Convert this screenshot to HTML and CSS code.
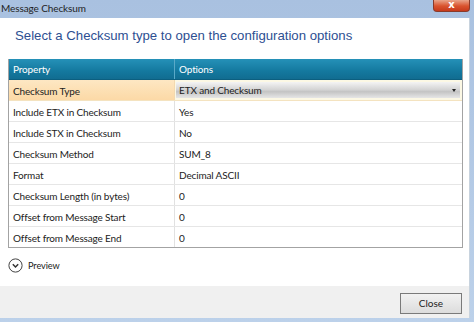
FILE: index.html
```html
<!DOCTYPE html>
<html>
<head>
<meta charset="utf-8">
<link rel="stylesheet" href="styles.css">
</head>
<body>
<div class="window">
  <div class="titlebar">
    <span class="title">Message Checksum</span>
    <div class="closebtn"><span>x</span></div>
  </div>
  <div class="frame">
    <div class="client">
      <div class="heading">Select a Checksum type to open the configuration options</div>
      <div class="grid">
        <div class="row head"><div class="c1">Property</div><div class="c2">Options</div></div>
        <div class="row sel"><div class="c1">Checksum Type</div><div class="c2"><div class="combo"><span>ETX and Checksum</span><span class="arrow"></span></div></div></div>
        <div class="row"><div class="c1">Include ETX in Checksum</div><div class="c2">Yes</div></div>
        <div class="row"><div class="c1">Include STX in Checksum</div><div class="c2">No</div></div>
        <div class="row"><div class="c1">Checksum Method</div><div class="c2">SUM_8</div></div>
        <div class="row"><div class="c1">Format</div><div class="c2">Decimal ASCII</div></div>
        <div class="row"><div class="c1">Checksum Length (in bytes)</div><div class="c2">0</div></div>
        <div class="row"><div class="c1">Offset from Message Start</div><div class="c2">0</div></div>
        <div class="row last"><div class="c1">Offset from Message End</div><div class="c2">0</div></div>
      </div>
      <div class="preview">
        <svg width="15" height="15" viewBox="0 0 15 15"><circle cx="7.5" cy="7.5" r="6.6" fill="none" stroke="#444" stroke-width="1"/><path d="M4.8 6.3 L7.5 9 L10.2 6.3" fill="none" stroke="#333" stroke-width="1.5"/></svg>
        <span>Preview</span>
      </div>
      <div class="footer">
        <div class="btn">Close</div>
      </div>
    </div>
  </div>
</div>
</body>
</html>
```
FILE: styles.css
```css
* { box-sizing: border-box; }
html, body { margin: 0; padding: 0; }
body { width: 474px; height: 322px; overflow: hidden; background: #b9cfe9; font-family: Lato, "Noto Sans", sans-serif; }
.window { width: 474px; height: 322px; display: flex; flex-direction: column; background: linear-gradient(#a9c1e0, #bcd1ea); }
.titlebar { height: 18px; display: flex; align-items: flex-start; justify-content: space-between; padding-left: 1px; }
.title { font-size: 10px; letter-spacing: -0.1px; color: #1e1e1e; line-height: 17px; }
.closebtn { width: 37px; height: 12px; margin-right: 4px; border: 1px solid #8a3a2a; border-top: none; border-radius: 0 0 4px 4px; background: linear-gradient(#e9a48a, #d9532e 55%, #c63a1c); display: flex; justify-content: center; }
.closebtn span { color: #fff; font: bold 10px/9px "DejaVu Sans", sans-serif; }
.frame { flex: 1; padding: 0 4px 4px 0; display: flex; }
.client { flex: 1; background: #fff; border-right: 1px solid #c8d3de; display: flex; flex-direction: column; }
.heading { font-family: "Liberation Sans", Arial, sans-serif; font-size: 13.2px; color: #2d4f92; padding: 10px 0 0 15px; height: 41px; }
.grid { margin-left: 8px; width: 455px; border: 1px solid #a3a3a3; border-top: none; font-size: 10px; letter-spacing: -0.15px; color: #222; }
.row { display: flex; height: 21px; border-bottom: 1px solid #e6e6e6; }
.row.last { border-bottom: none; height: 20px; }
.c1 { width: 166px; border-right: 1px solid #e1e1e1; padding: 2px 0 0 4px; line-height: 18px; white-space: nowrap; }
.c2 { flex: 1; padding: 2px 0 0 4px; line-height: 18px; white-space: nowrap; }
.row.head { height: 21px; background: linear-gradient(#2591b8, #14799f 60%, #116d91); color: #fff; border-bottom: 1px solid #0c5f80; }
.row.head .c1 { border-right: 1px solid #5aa9c8; padding-top: 1px; }
.row.head .c2 { padding-top: 1px; }
.row.sel { background: linear-gradient(#fde7c3, #fcd9a6); border-bottom: 1px solid #f4e3c0; }
.row.sel .c1 { border-right: 1px solid #f2d9b0; }
.row.sel .c2 { padding: 2px 2px 2px 1px; background: #fcf8e4; }
.combo { height: 16px; background: linear-gradient(#f4f4f4, #d2d2d2 50%, #c4c4c4 60%, #e6e6e6); display: flex; justify-content: space-between; align-items: center; padding-left: 3px; line-height: 16px; }
.arrow { width: 0; height: 0; border-left: 2.5px solid transparent; border-right: 2.5px solid transparent; border-top: 3px solid #222; margin-right: 4px; }
.preview { display: flex; gap: 5px; padding: 10px 0 0 8px; height: 38px; align-items: flex-start; font-size: 9.2px; letter-spacing: -0.1px; color: #222; line-height: 15px; }
.footer { flex: 1; background: #f0f0f0; display: flex; justify-content: flex-end; align-items: flex-start; padding: 7px 7px 0 0; }
.btn { width: 62px; height: 21px; border: 1px solid #7a7a7a; background: linear-gradient(#f2f2f2, #dcdcdc); font-size: 10px; color: #222; text-align: center; line-height: 19px; }
```
